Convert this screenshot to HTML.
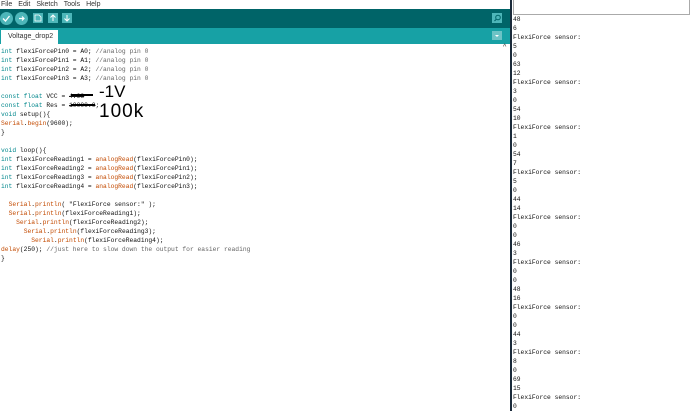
<!DOCTYPE html>
<html><head><style>
*{margin:0;padding:0;box-sizing:border-box}
body{width:690px;height:411px;overflow:hidden;background:#fff;position:relative;font-family:"Liberation Sans",sans-serif}
.menu{position:absolute;left:0;top:0;width:510px;height:9px;font-size:7px;line-height:9px;color:#333;background:#fff}
.menu span{margin-right:5px;margin-left:1px}
.tb{position:absolute;left:0;top:9px;width:510px;height:19px;background:#006468}
.tabs{position:absolute;left:0;top:28px;width:510px;height:16px;background:#17a1a5}
.tab{position:absolute;left:1px;top:2px;width:57px;height:14px;background:#fff;font-size:7px;line-height:13px;padding-left:7px;color:#333}
.c{position:absolute;width:13px;height:13px;border-radius:50%;background:#4db6b9;top:12px}
.s{position:absolute;width:10px;height:10px;background:#4db6b9;top:13px}
.code{position:absolute;left:1px;top:46.5px;font-family:"Liberation Mono",monospace;font-size:6.3px;line-height:9px;color:#111;white-space:pre}
.k{color:#00878c}.o{color:#c34a00}.g{color:#666}
.div{position:absolute;left:510px;top:0;width:2px;height:411px;background:#1a2a3a}
.inp{position:absolute;left:513px;top:0;width:177px;height:15px;border:1px solid #aaa;border-top:none;background:#fff}
.ser{position:absolute;left:513px;top:14.5px;font-family:"Liberation Mono",monospace;font-size:6.3px;line-height:9px;color:#111;white-space:pre}
.hw{position:absolute;font-family:"Liberation Sans",sans-serif;color:#000;font-weight:normal}
</style></head><body>
<div class="menu"><span>File</span><span>Edit</span><span>Sketch</span><span>Tools</span><span>Help</span></div>
<div class="tb">
<div class="c" style="left:0;top:3px"></div><div class="c" style="left:15px;top:3px"></div>
<div class="s" style="left:33px;top:4px"></div><div class="s" style="left:48px;top:4px"></div><div class="s" style="left:62px;top:4px"></div>
<div class="s" style="left:492px;top:4px"></div>
<svg style="position:absolute;left:0;top:0" width="510" height="19"><polyline points="3,9.5 5.5,12 9.5,7" stroke="#fff" stroke-width="1.3" fill="none"/><path d="M19,9.5H24M22,7.5L24,9.5L22,11.5" stroke="#fff" stroke-width="1.2" fill="none"/><path d="M35,6h4l2,2v4h-6z" stroke="#fff" stroke-width=".8" fill="none"/><path d="M53,6v6M50.5,8.5L53,6L55.5,8.5" stroke="#fff" stroke-width="1" fill="none"/><path d="M67,6v6M64.5,9.5L67,12L69.5,9.5" stroke="#fff" stroke-width="1" fill="none"/><circle cx="498" cy="8.5" r="2.3" stroke="#006468" stroke-width="1" fill="none"/><path d="M496,10.5L494.5,12" stroke="#006468" stroke-width="1.2"/></svg>
</div>
<div class="tabs"><div class="tab">Voltage_drop2</div>
<div style="position:absolute;left:492px;top:3px;width:10px;height:9px;background:#6cc3c6"></div>
<div style="position:absolute;left:495px;top:7px;width:0;height:0;border-left:2px solid transparent;border-right:2px solid transparent;border-top:2px solid #fff"></div>
</div>
<div style="position:absolute;left:503px;top:44px;font-size:7px;color:#333">^</div>
<div class="code"><span class="k">int</span> flexiForcePin0 = A0; <span class="g">//analog pin 0</span>
<span class="k">int</span> flexiForcePin1 = A1; <span class="g">//analog pin 0</span>
<span class="k">int</span> flexiForcePin2 = A2; <span class="g">//analog pin 0</span>
<span class="k">int</span> flexiForcePin3 = A3; <span class="g">//analog pin 0</span>

<span class="k">const float</span> VCC = <s>4.98</s>
<span class="k">const float</span> Res = <s>10000.0</s>;
<span class="k">void</span> setup(){
<span class="o">Serial</span>.<span class="o">begin</span>(9600);
}

<span class="k">void</span> loop(){
<span class="k">int</span> flexiForceReading1 = <span class="o">analogRead</span>(flexiForcePin0);
<span class="k">int</span> flexiForceReading2 = <span class="o">analogRead</span>(flexiForcePin1);
<span class="k">int</span> flexiForceReading3 = <span class="o">analogRead</span>(flexiForcePin2);
<span class="k">int</span> flexiForceReading4 = <span class="o">analogRead</span>(flexiForcePin3);

  <span class="o">Serial</span>.<span class="o">println</span>( "FlexiForce sensor:" );
  <span class="o">Serial</span>.<span class="o">println</span>(flexiForceReading1);
    <span class="o">Serial</span>.<span class="o">println</span>(flexiForceReading2);
      <span class="o">Serial</span>.<span class="o">println</span>(flexiForceReading3);
        <span class="o">Serial</span>.<span class="o">println</span>(flexiForceReading4);
<span class="o">delay</span>(250); <span class="g">//just here to slow down the output for easier reading</span>
}</div>
<div style="position:absolute;left:71px;top:94px;width:22px;height:2px;background:#000"></div>
<div style="position:absolute;left:71px;top:104px;width:24px;height:1.5px;background:#000"></div>
<div class="hw" style="left:99px;top:83px;font-size:17px;line-height:17px">-1V</div>
<div class="hw" style="left:99px;top:102px;font-size:19px;line-height:19px;letter-spacing:1px">100k</div>
<div class="div"></div>
<div class="inp"></div>
<div class="ser">48
6
FlexiForce sensor:
5
0
63
12
FlexiForce sensor:
3
0
54
10
FlexiForce sensor:
1
0
54
7
FlexiForce sensor:
5
0
44
14
FlexiForce sensor:
0
0
46
3
FlexiForce sensor:
0
0
48
16
FlexiForce sensor:
0
0
44
3
FlexiForce sensor:
8
0
69
15
FlexiForce sensor:
0</div>
</body></html>
